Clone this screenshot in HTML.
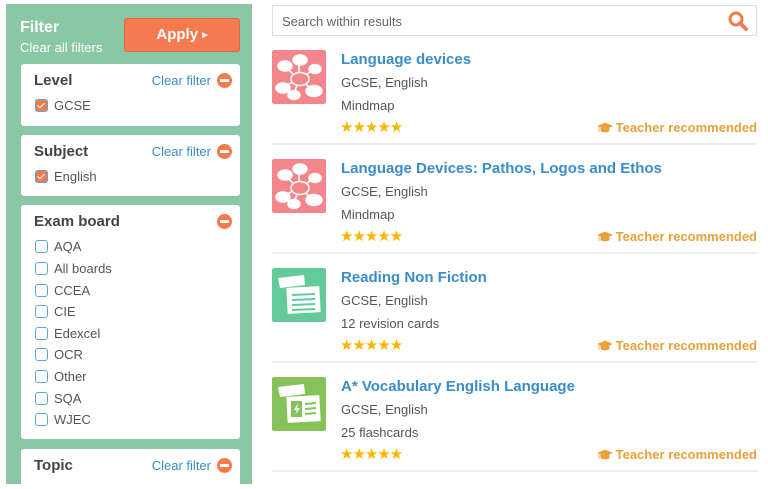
<!DOCTYPE html>
<html><head><style>
*{box-sizing:border-box;margin:0;padding:0}
body{width:768px;height:475px;overflow:hidden;background:#fff;font-family:"Liberation Sans",sans-serif;color:#555;position:relative}
.side{position:absolute;left:6px;top:4px;width:246px;height:480px;background:#8ac7a4}
.ft{position:absolute;left:20px;top:19px;color:#fff;font-weight:bold;font-size:16px}
.ca{position:absolute;left:20px;top:40px;color:#fff;font-size:13px}
.apply{position:absolute;left:124px;top:18px;width:116px;height:34px;background:#f47b4f;border:1px solid #e06a40;border-radius:3px;color:#fff;font-weight:bold;font-size:15px;text-align:center;line-height:32px}
.box{position:absolute;left:21px;width:219px;background:#fff;border-radius:3px}
.box h3{position:absolute;left:13px;top:8px;font-size:15px;color:#444}
.cf{position:absolute;right:29px;top:9px;font-size:13px;color:#3a8dc8}
.minus{position:absolute;right:8px;top:9px;width:15px;height:15px;border-radius:50%;background:#f47b4f}
.minus:after{content:"";position:absolute;left:3px;top:6px;width:9px;height:3px;background:#fff}
.opt{position:absolute;left:14px;font-size:13px;color:#555}
.cb{display:inline-block;width:13px;height:13px;border:1.5px solid #5ba6d6;border-radius:3px;vertical-align:-2px;margin-right:6px;position:relative}
.cb.on{background:#f47b4f;border-color:#5ba6d6}
.cb.on:after{content:"";position:absolute;left:3px;top:1px;width:3px;height:6px;border:solid #fff;border-width:0 1.5px 1.5px 0;transform:rotate(45deg)}
.search{position:absolute;left:272px;top:5px;width:485px;height:31px;border:1px solid #ddd;font-size:13px;color:#666;padding:8px 9px}
.item{position:absolute;left:272px;width:485px;height:95px;border-bottom:2px solid #eee}
.ic{position:absolute;left:0;top:0;width:54px;height:54px;border-radius:2px}
.t{position:absolute;left:69px;top:1px;font-size:15px;font-weight:bold;color:#3a8dc8}
.m1{position:absolute;left:69px;top:25px;font-size:13px}
.m2{position:absolute;left:69px;top:48px;font-size:13px}
.st{position:absolute;left:68px;top:68px;color:#fbb400;font-size:15px;letter-spacing:-1px}
.tr{position:absolute;right:0;top:70px;color:#e8a03a;font-size:13px;font-weight:bold}
.tr svg{vertical-align:-2px;margin-right:3px}
</style></head><body>
<div class="side"></div>
<div class="ft">Filter</div>
<div class="ca">Clear all filters</div>
<div class="apply">Apply <span style="font-size:7px;vertical-align:2px">&#9654;</span></div>

<div class="box" style="top:64px;height:62px"><h3>Level</h3><span class="cf">Clear filter</span><span class="minus"></span>
<div class="opt" style="top:34px"><span class="cb on"></span>GCSE</div></div>
<div class="box" style="top:135px;height:61px"><h3>Subject</h3><span class="cf">Clear filter</span><span class="minus"></span>
<div class="opt" style="top:34px"><span class="cb on"></span>English</div></div>
<div class="box" style="top:205px;height:234px"><h3>Exam board</h3><span class="minus"></span>
<div class="opt" style="top:34px"><span class="cb"></span>AQA</div>
<div class="opt" style="top:56px"><span class="cb"></span>All boards</div>
<div class="opt" style="top:78px"><span class="cb"></span>CCEA</div>
<div class="opt" style="top:99px"><span class="cb"></span>CIE</div>
<div class="opt" style="top:121px"><span class="cb"></span>Edexcel</div>
<div class="opt" style="top:142px"><span class="cb"></span>OCR</div>
<div class="opt" style="top:164px"><span class="cb"></span>Other</div>
<div class="opt" style="top:186px"><span class="cb"></span>SQA</div>
<div class="opt" style="top:207px"><span class="cb"></span>WJEC</div></div>
<div class="box" style="top:449px;height:40px"><h3>Topic</h3><span class="cf">Clear filter</span><span class="minus"></span></div>

<div class="search">Search within results
<svg style="position:absolute;right:7px;top:4px" width="22" height="22" viewBox="0 0 22 22"><circle cx="9" cy="9" r="6" fill="none" stroke="#f47b4f" stroke-width="3"/><line x1="13" y1="13" x2="19" y2="19" stroke="#f47b4f" stroke-width="4" stroke-linecap="round"/></svg></div>

<svg width="0" height="0" style="position:absolute"><defs>
<g id="mm"><rect width="54" height="54" rx="2" fill="#f4868b"/><g stroke="#fff" stroke-width="1.5" fill="#fff"><line x1="27" y1="29" x2="13" y2="17"/><line x1="27" y1="29" x2="27" y2="12"/><line x1="27" y1="29" x2="43" y2="19"/><line x1="27" y1="29" x2="11" y2="37"/><line x1="27" y1="29" x2="22" y2="44"/><line x1="27" y1="29" x2="41" y2="40"/><ellipse cx="13" cy="16" rx="7" ry="5"/><ellipse cx="28" cy="10" rx="7" ry="5"/><ellipse cx="43" cy="19" rx="6" ry="4.5"/><ellipse cx="11" cy="38" rx="7" ry="5"/><ellipse cx="22" cy="45" rx="6" ry="4.5"/><ellipse cx="42" cy="41" rx="8" ry="5.5"/><ellipse cx="28" cy="29" rx="9" ry="6.5" fill="#f4868b"/></g></g>
<path id="cap" d="M0 4 L7 1 L14 4 L7 7Z M3 6 L3 9 Q7 11 11 9 L11 6 L7 8Z M1 5 L1 10" fill="#e8a03a" stroke="#e8a03a" stroke-width="0.8"/>
</defs></svg>

<div class="item" style="top:50px">
<svg class="ic" viewBox="0 0 54 54"><use href="#mm"/></svg>
<div class="t">Language devices</div><div class="m1">GCSE, English</div><div class="m2">Mindmap</div><div class="st">★★★★★</div><div class="tr"><svg width="15" height="12" viewBox="0 0 15 12"><use href="#cap"/></svg>Teacher recommended</div></div>

<div class="item" style="top:159px">
<svg class="ic" viewBox="0 0 54 54"><use href="#mm"/></svg>
<div class="t">Language Devices: Pathos, Logos and Ethos</div><div class="m1">GCSE, English</div><div class="m2">Mindmap</div><div class="st">★★★★★</div><div class="tr"><svg width="15" height="12" viewBox="0 0 15 12"><use href="#cap"/></svg>Teacher recommended</div></div>

<div class="item" style="top:268px">
<svg class="ic" viewBox="0 0 54 54"><rect width="54" height="54" rx="2" fill="#63cb9b"/><path d="M6 10 L32 7 L33 17 L8 20Z" fill="#fff"/><rect x="15" y="19" width="33" height="26" fill="#fff" transform="rotate(-3 31 32)"/><g stroke="#63cb9b" stroke-width="2"><line x1="20" y1="27" x2="43" y2="26"/><line x1="20" y1="32" x2="43" y2="31"/><line x1="20" y1="37" x2="43" y2="36"/><line x1="20" y1="42" x2="43" y2="41"/></g></svg>
<div class="t">Reading Non Fiction</div><div class="m1">GCSE, English</div><div class="m2">12 revision cards</div><div class="st">★★★★★</div><div class="tr"><svg width="15" height="12" viewBox="0 0 15 12"><use href="#cap"/></svg>Teacher recommended</div></div>

<div class="item" style="top:377px">
<svg class="ic" viewBox="0 0 54 54"><rect width="54" height="54" rx="2" fill="#85c35a"/><path d="M6 10 L32 7 L33 17 L8 20Z" fill="#fff"/><rect x="15" y="19" width="33" height="26" fill="#fff" transform="rotate(-3 31 32)"/><rect x="19" y="24" width="11" height="16" fill="#85c35a"/><path d="M26 26 L22 33 L25 33 L23 38 L28 31 L25 31Z" fill="#fff"/><g stroke="#85c35a" stroke-width="2"><line x1="33" y1="27" x2="44" y2="26"/><line x1="33" y1="32" x2="44" y2="31"/><line x1="33" y1="37" x2="44" y2="36"/></g></svg>
<div class="t">A* Vocabulary English Language</div><div class="m1">GCSE, English</div><div class="m2">25 flashcards</div><div class="st">★★★★★</div><div class="tr"><svg width="15" height="12" viewBox="0 0 15 12"><use href="#cap"/></svg>Teacher recommended</div></div>
</body></html>
